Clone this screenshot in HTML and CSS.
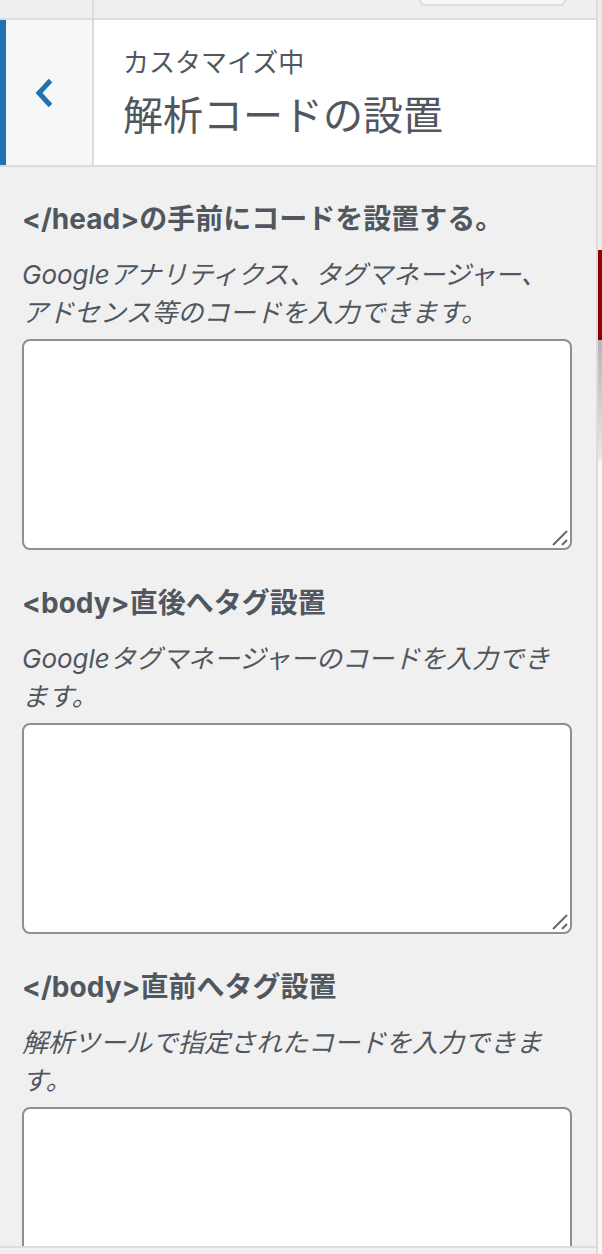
FILE: index.html
```html
<!DOCTYPE html>
<html lang="ja">
<head>
<meta charset="utf-8">
<title>解析コードの設置</title>
<link rel="stylesheet" href="styles.css">
</head>
<body>
<div class="frame">
  <div class="sidebar">
    <div class="topbar">
      <div class="topbar-left"></div>
      <div class="topbar-fill"></div>
      <div class="topbar-btn"></div>
    </div>
    <div class="header">
      <div class="accent"></div>
      <button class="back" aria-label="戻る">
        <svg width="18" height="30" viewBox="0 0 18 30"><polyline points="15.5,2.5 4,15 15.5,27.5" fill="none" stroke="#2271b1" stroke-width="5" stroke-linejoin="miter" stroke-linecap="butt"/></svg>
      </button>
      <div class="titles">
        <div class="crumb">カスタマイズ中</div>
        <h1 class="title">解析コードの設置</h1>
      </div>
    </div>
    <div class="content">
      <div class="control">
        <h2 class="control-title">&lt;/head&gt;の手前にコードを設置する。</h2>
        <p class="desc">Googleアナリティクス、タグマネージャー、アドセンス等のコードを入力できます。</p>
        <div class="code-wrap">
          <textarea class="code"></textarea>
          <svg class="grip" width="16" height="16" viewBox="0 0 16 16"><path d="M1 15 L15 1 M10 15 L15 10" stroke="#646970" stroke-width="2" fill="none"/></svg>
        </div>
      </div>
      <div class="control">
        <h2 class="control-title">&lt;body&gt;直後へタグ設置</h2>
        <p class="desc">Googleタグマネージャーのコードを入力できます。</p>
        <div class="code-wrap">
          <textarea class="code"></textarea>
          <svg class="grip" width="16" height="16" viewBox="0 0 16 16"><path d="M1 15 L15 1 M10 15 L15 10" stroke="#646970" stroke-width="2" fill="none"/></svg>
        </div>
      </div>
      <div class="control">
        <h2 class="control-title">&lt;/body&gt;直前へタグ設置</h2>
        <p class="desc">解析ツールで指定されたコードを入力できます。</p>
        <div class="code-wrap">
          <textarea class="code"></textarea>
          <svg class="grip" width="16" height="16" viewBox="0 0 16 16"><path d="M1 15 L15 1 M10 15 L15 10" stroke="#646970" stroke-width="2" fill="none"/></svg>
        </div>
      </div>
    </div>
    <div class="footer"></div>
  </div>
  <div class="preview">
    <div class="pv-top"></div>
    <div class="pv-red"></div>
    <div class="pv-fade"></div>
    <div class="pv-rest"></div>
  </div>
</div>
</body>
</html>
```

FILE: styles.css
```css
* { box-sizing: border-box; }
html, body {
  margin: 0;
  padding: 0;
  width: 602px;
  height: 1254px;
  overflow: hidden;
  background: #f0f0f1;
  font-family: "Inter", "Noto Sans CJK JP", sans-serif;
  color: #50575e;
}
.frame {
  display: flex;
  width: 602px;
  height: 1254px;
}
.sidebar {
  width: 598px;
  height: 1254px;
  border-right: 2px solid #dcdcde;
  display: flex;
  flex-direction: column;
  background: #f0f0f1;
}
.topbar {
  height: 20px;
  flex: none;
  display: flex;
  border-bottom: 2px solid #dcdcde;
  background: #efefef;
}
.topbar-left {
  width: 94px;
  border-right: 2px solid #dcdcde;
}
.topbar-fill { flex: 1; }
.topbar-btn {
  width: 147px;
  height: 6px;
  margin-right: 30px;
  background: #f6f7f7;
  border: 2px solid #dcdcde;
  border-top: none;
  border-radius: 0 0 8px 8px;
}
.header {
  height: 147px;
  flex: none;
  display: flex;
  background: #fff;
  border-bottom: 2px solid #dcdcde;
}
.accent {
  width: 6px;
  background: #2271b1;
}
.back {
  width: 88px;
  margin: 0;
  padding: 0 0 0 29px;
  border: none;
  border-right: 2px solid #dcdcde;
  background: #f6f7f7;
  display: flex;
  align-items: center;
  justify-content: flex-start;
}
.back svg { display: block; margin-top: 1px; }
.titles {
  padding: 28px 0 0 29px;
}
.crumb {
  font-size: 26px;
  line-height: 30px;
  color: #50575e;
}
.title {
  margin: 14px 0 0;
  font-size: 40px;
  line-height: 48px;
  font-weight: 400;
  color: #50575e;
}
.content {
  flex: 1;
  overflow: hidden;
  padding: 32px 24px 0 22px;
}
.control {
  margin-bottom: 33px;
}
.control-title {
  margin: 0;
  font-size: 28px;
  line-height: 40px;
  font-weight: 700;
  color: #50575e;
}
.desc {
  margin: 17px 0 0;
  width: 540px;
  font-size: 26px;
  line-height: 38px;
  font-style: italic;
  color: #50575e;
}
.code-wrap {
  position: relative;
  margin-top: 7px;
  width: 550px;
}
.code {
  display: block;
  width: 550px;
  height: 211px;
  background: #fff;
  border: 2px solid #8c8f94;
  border-radius: 8px;
  resize: none;
  padding: 0;
  margin: 0;
}
.grip {
  position: absolute;
  right: 4px;
  bottom: 4px;
  display: block;
}
.footer {
  height: 8px;
  flex: none;
  border-top: 2px solid #dcdcde;
  background: #f0f0f1;
}
.preview {
  width: 4px;
  display: flex;
  flex-direction: column;
}
.pv-top { height: 250px; background: #ededed; }
.pv-red { height: 90px; background: #8b0000; }
.pv-fade { height: 120px; background: linear-gradient(#b5b5b5, #e8e8e8); }
.pv-rest { flex: 1; background: #f7f7f7; }
```
